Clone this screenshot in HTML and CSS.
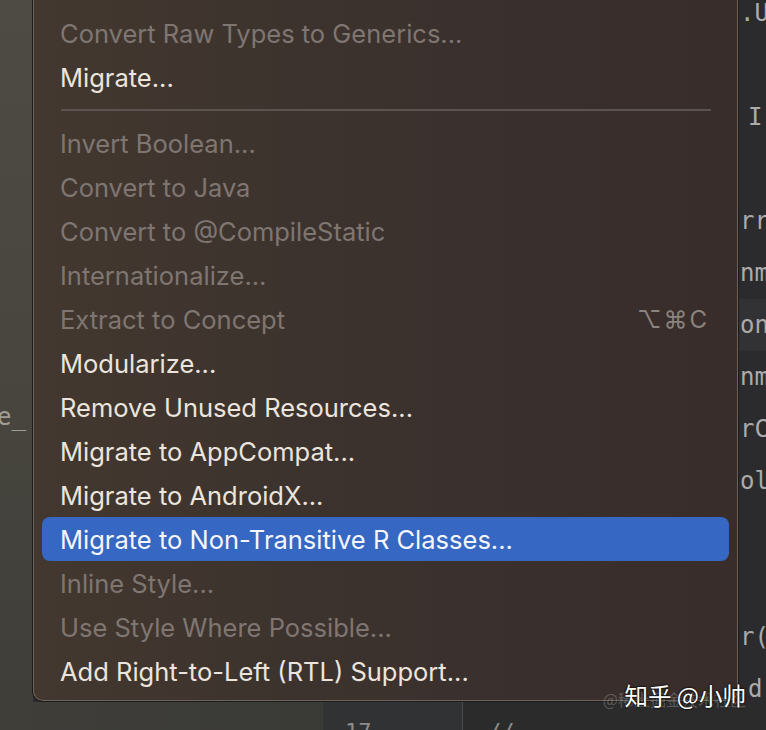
FILE: index.html
```html
<!DOCTYPE html>
<html lang="en">

<head>
    <meta charset="UTF-8">
    <meta name="viewport" content="width=device-width, initial-scale=1.0">
    <title>Refactor Menu</title>
    <link rel="stylesheet" href="styles.css">
</head>

<body>

    <div class="screen">
        <div class="top">
            <div class="gutter">
                <div class="gutter-text">e_</div>
            </div>

            <div class="menu">
                <div class="item disabled">Convert Raw Types to Generics...</div>
                <div class="item">Migrate...</div>
                <div class="separator"></div>
                <div class="item disabled">Invert Boolean...</div>
                <div class="item disabled">Convert to Java</div>
                <div class="item disabled">Convert to @CompileStatic</div>
                <div class="item disabled">Internationalize...</div>
                <div class="item disabled">Extract to Concept <span class="shortcut">⌥⌘C</span></div>
                <div class="item">Modularize...</div>
                <div class="item">Remove Unused Resources...</div>
                <div class="item">Migrate to AppCompat...</div>
                <div class="item">Migrate to AndroidX...</div>
                <div class="item selected">Migrate to Non-Transitive R Classes...</div>
                <div class="item disabled">Inline Style...</div>
                <div class="item disabled">Use Style Where Possible...</div>
                <div class="item">Add Right-to-Left (RTL) Support...</div>
            </div>

            <div class="code">
                <div class="code-lines">
                    <div class="line">.U</div>
                    <div class="line"></div>
                    <div class="line indent">I</div>
                    <div class="line"></div>
                    <div class="line">rr</div>
                    <div class="line">nm</div>
                    <div class="line current">on</div>
                    <div class="line">nm</div>
                    <div class="line">rC</div>
                    <div class="line">ol</div>
                    <div class="line"></div>
                    <div class="line"></div>
                    <div class="line">r(</div>
                    <div class="line indent">d</div>
                </div>
            </div>
        </div>

        <div class="bottom">
            <div class="bottom-left"></div>
            <div class="bottom-gutter"><span>17</span></div>
            <div class="bottom-code"><span>//</span></div>
        </div>

        <div class="watermark">
            <span class="watermark-faint">@稀土掘金技术社区</span>
            <span class="watermark-main">知乎 @小帅</span>
        </div>
    </div>

</body>

</html>
```

FILE: styles.css
```css
body {
    margin: 0;
    background-color: #2b2b2b;
    font-family: Inter, "Noto Sans", sans-serif;
}

.screen {
    position: relative;
    width: 766px;
    height: 730px;
    overflow: hidden;
    background-color: #2b2b2b;
}

.top {
    display: flex;
    height: 702px;
}

.gutter {
    width: 33px;
    flex-shrink: 0;
    background: linear-gradient(180deg, #4d4b43, #47453e 60%, #3f3e39);
    overflow: hidden;
}

.gutter-text {
    margin-top: 403px;
    margin-left: -3px;
    font-family: "DejaVu Sans Mono", monospace;
    font-size: 24px;
    color: #a19e95;
}

.menu {
    width: 705px;
    flex-shrink: 0;
    height: 701px;
    box-sizing: border-box;
    padding: 11px 8px 7px;
    background: linear-gradient(90deg, #42382f, #3a302d 60%, #382d2b);
    border: 1px solid #6b645f;
    border-top: none;
    border-radius: 0 0 10px 10px;
    box-shadow: 0 0 0 1px #1d1a18;
    position: relative;
    z-index: 1;
}

.item {
    display: flex;
    justify-content: space-between;
    align-items: center;
    height: 44px;
    padding: 0 20px 0 18px;
    border-radius: 8px;
    font-size: 25.5px;
    color: #ebe5de;
}

.item.disabled {
    color: #7f7672;
}

.item.selected {
    background-color: #3667c2;
    color: #f4f6fb;
}

.shortcut {
    color: #8b837e;
    font-size: 24px;
    letter-spacing: 2px;
}

.separator {
    height: 2px;
    margin: 10px 18px 10px 19px;
    background-color: #5b5350;
}

.code {
    flex: 1;
    background-color: #2b2b2d;
    font-family: "DejaVu Sans Mono", monospace;
    font-size: 24px;
    color: #ababab;
    overflow: hidden;
}

.code-lines {
    margin-top: -13px;
}

.line {
    height: 52px;
    line-height: 52px;
    padding-left: 2px;
    white-space: pre;
}

.line.current {
    background-color: #323234;
}

.line.indent {
    padding-left: 10px;
}

.bottom {
    display: flex;
    height: 28px;
}

.bottom-left {
    width: 323px;
    background: linear-gradient(90deg, #3f3e39, #3a3a37);
}

.bottom-gutter {
    width: 139px;
    background-color: #313233;
    border-right: 1px solid #4a4a4a;
    overflow: hidden;
}

.bottom-code {
    flex: 1;
    background-color: #2b2b2b;
    overflow: hidden;
}

.bottom-gutter span,
.bottom-code span {
    display: block;
    margin-top: 17px;
    font-family: "DejaVu Sans Mono", monospace;
    font-size: 22px;
    color: #8d8d8d;
}

.bottom-gutter span {
    margin-left: 22px;
}

.bottom-code span {
    margin-left: 25px;
}

.watermark {
    position: absolute;
    right: 20px;
    top: 678px;
    z-index: 2;
    font-family: "Noto Sans CJK SC", sans-serif;
}

.watermark-faint {
    position: absolute;
    right: 0;
    top: 9px;
    white-space: nowrap;
    font-size: 16px;
    color: rgba(150, 150, 150, 0.45);
}

.watermark-main {
    position: relative;
    white-space: nowrap;
    font-size: 23.5px;
    color: #ffffff;
    text-shadow: 0 0 2px #000, 0 0 2px #000;
}
```
